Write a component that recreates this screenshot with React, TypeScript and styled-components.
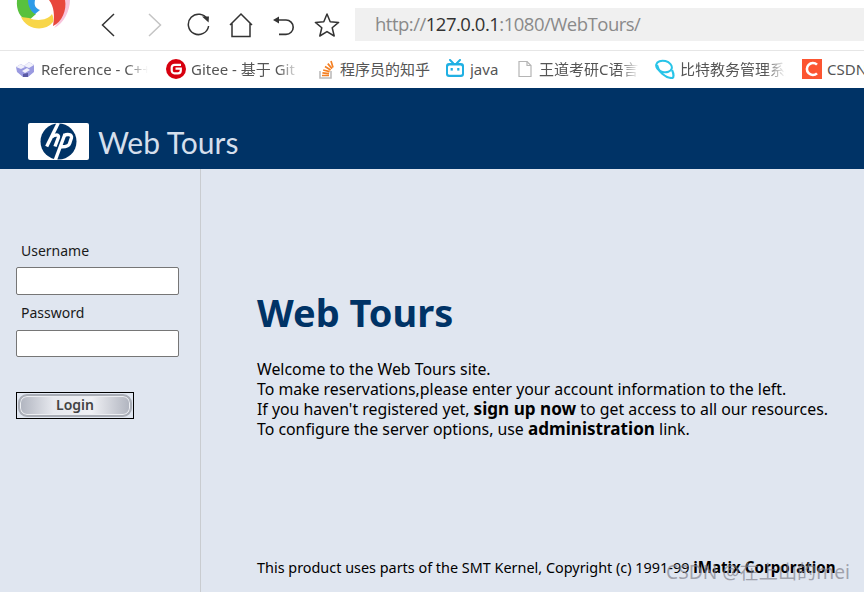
import React from 'react'
import styled, { createGlobalStyle } from 'styled-components'

const GlobalStyle = createGlobalStyle`
  html, body {
    margin: 0;
    padding: 0;
    height: 100%;
    overflow: hidden;
    background: #e0e6f0;
  }
`

const Page = styled.div`
  position: relative;
  width: 864px;
  height: 592px;
  overflow: hidden;
  display: flex;
  flex-direction: column;
  font-family: "Noto Sans", "Noto Sans CJK SC", sans-serif;
`

const Toolbar = styled.div`
  box-sizing: border-box;
  display: flex;
  align-items: flex-start;
  padding-left: 16px;
  background: #fff;
  border-bottom: 1px solid #e6e6e6;
  flex: none;
  height: 51px;
`

const LogoIcon = styled.svg`
  flex: none;
`

const NavIcon = styled.svg<{ $left: number }>`
  margin-left: ${props => props.$left}px;
  margin-top: 12px;
  flex: none;
`

const AddressBar = styled.div`
  margin-left: 15px;
  margin-top: 8px;
  flex: 1;
  height: 33px;
  padding-left: 20px;
  background: #f0f0f0;
  font-family: "Open Sans", sans-serif;
  font-size: 18.5px;
  letter-spacing: -0.5px;
  line-height: 32px;
  color: #8a8a8a;
  white-space: nowrap;
`

const Host = styled.span`
  color: #333;
`

const Bookmarks = styled.div`
  height: 37px;
  box-sizing: border-box;
  padding: 0 0 2px 15px;
  flex: none;
  display: flex;
  align-items: center;
  background: #fff;
  overflow: hidden;
`

const Bookmark = styled.div<{ $gap: number }>`
  display: flex;
  align-items: center;
  gap: 6px;
  flex: none;
  margin-right: ${props => props.$gap}px;
`

const TightIcon = styled.svg`
  margin-right: -1px;
`

const BookmarkText = styled.span<{ $width: number; $fade: boolean }>`
  width: ${props => props.$width}px;
  font-size: 15px;
  line-height: 20px;
  color: #555;
  white-space: nowrap;
  overflow: hidden;
  ${props => props.$fade && `
    -webkit-mask-image: linear-gradient(to right, #000 80%, transparent 100%);
    mask-image: linear-gradient(to right, #000 80%, transparent 100%);
  `}
`

const Header = styled.div`
  height: 81px;
  flex: none;
  box-sizing: border-box;
  padding: 35px 0 0 28px;
  display: flex;
  align-items: flex-start;
  gap: 9px;
  background: #003366;
`

const Brand = styled.span`
  font-family: Lato, sans-serif;
  font-weight: 400;
  font-size: 30px;
  line-height: 38px;
  color: #d5dfec;
`

const Body = styled.div`
  flex: 1;
  display: flex;
  background: #e0e6f0;
`

const Sidebar = styled.div`
  width: 201px;
  flex: none;
  box-sizing: border-box;
  padding: 73px 0 0 16px;
  border-right: 1px solid #c9ccd0;
  display: flex;
  flex-direction: column;
`

const FieldLabel = styled.label`
  margin-left: 5px;
  height: 18px;
  font-size: 14px;
  line-height: 18px;
  color: #1a1a1a;
`

const TextInput = styled.input<{ $top: number; $height: number }>`
  display: block;
  width: 163px;
  height: ${props => props.$height}px;
  box-sizing: border-box;
  margin: ${props => props.$top}px 0 9px;
  padding: 0 4px;
  background: #fff;
  border: 1px solid #767676;
  border-radius: 2px;
`

const LoginOuter = styled.div`
  margin-top: 26px;
  width: 118px;
  height: 27px;
  box-sizing: border-box;
  padding: 1px;
  border: 1px solid #000;
  background: #e0e6f0;
`

const LoginButton = styled.button`
  display: block;
  width: 100%;
  height: 100%;
  padding: 0 0 2px;
  border: 2px solid #a9adb6;
  border-radius: 9px;
  box-shadow: inset 0 0 0 1px #eceef2;
  background: linear-gradient(to right, #b0b4bf 0%, #e6e8ee 30%, #eff0f4 65%, #b0b4bf 100%);
  font-family: "Noto Sans", sans-serif;
  font-size: 14px;
  font-weight: 600;
  line-height: 15px;
  color: #444;
`

const Main = styled.div`
  flex: 1;
  padding: 0 0 0 56px;
  display: flex;
  flex-direction: column;
`

const Title = styled.h1`
  margin: 118px 0 0;
  height: 50px;
  font-size: 38px;
  line-height: 50px;
  font-weight: 700;
  color: #003366;
`

const Welcome = styled.div`
  margin-top: 22px;
  font-size: 15.85px;
  line-height: 20px;
  color: #000;
  white-space: nowrap;
`

const Strong = styled.b<{ $scale: number }>`
  font-size: ${props => props.$scale}em;
  line-height: 1;
`

const Footer = styled.div`
  margin-top: auto;
  padding-bottom: 14px;
  font-size: 14.42px;
  line-height: 20px;
  color: #000;
  white-space: nowrap;
`

const Watermark = styled.div`
  position: absolute;
  right: 14px;
  bottom: 8px;
  font-size: 19.2px;
  line-height: 24px;
  color: rgba(130, 130, 140, 0.7);
  white-space: nowrap;
`

const AppLogo = () => (
  <LogoIcon width="54" height="30" viewBox="0 0 54 30">
    <defs>
      <filter id="soft">
        <feGaussianBlur stdDeviation="0.6" />
      </filter>
    </defs>
    <g filter="url(#soft)">
      <path d="M49 0 H54 C54 10 48 24 38 28 C44 20 50 10 49 0 Z" fill="#f8c4dc" />
      <path d="M33 0 H49 C51 10 46 22 37 26 C39 16 38 6 33 0 Z" fill="#e8473c" />
      <path d="M1 0 C0 10 4 18 12 21 L20 14 C16 11 15 6 15 0 Z" fill="#58c13c" />
      <path d="M12 0 H19 C18 5 19 8 24 10 L19 14 C14 11 12 5 12 0 Z" fill="#2f9be8" />
      <path d="M5 17 C10 29 28 33 37 22 C38 20 37 16 36 14 C31 21 20 21 13 18 Z" fill="#f8d64a" />
    </g>
  </LogoIcon>
)

const HpLogo = () => (
  <svg width="61" height="37" viewBox="0 0 61 37">
    <rect width="61" height="37" rx="2" fill="#fff" />
    <circle cx="30.5" cy="18.5" r="18" fill="#003366" />
    <g fill="none" stroke="#fff" strokeWidth="3.4">
      <path d="M30.3 0 L18.7 23.5" />
      <path d="M24 14 C26 11.5 31.5 11 30.4 14.5 L27 23.5" />
      <path d="M37 11 L27.3 37" />
      <path d="M36 12.5 C39 11 44.5 11 43.4 15 L41.6 20.5 C40.4 24 36.5 24 32.4 23.7" />
    </g>
  </svg>
)

const Bookmarked = [
  {
    width: 107,
    gap: 18,
    fade: true,
    text: 'Reference - C++',
    icon: (
      <svg width="20" height="20" viewBox="0 0 20 20">
        <path d="M1 8 L6 5 L9 7 L14 3 L19 6 L19 13 L13 18 L8 18 L2 13 Z" fill="#9a9ae0" />
        <path d="M1 8 L6 5 L10 8 L6 10 Z M9 7 L14 3 L19 6 L14 9 Z M7 12 L12 9 L15 11 L10 14 Z" fill="#f2f2fb" />
        <path d="M8 18 L13 18 L13 14 L8 15 Z" fill="#5a5aa4" />
      </svg>
    )
  },
  {
    width: 109,
    gap: 18,
    fade: true,
    text: 'Gitee - 基于 Git',
    icon: (
      <TightIcon width="20" height="20" viewBox="0 0 20 20">
        <circle cx="10" cy="10" r="10" fill="#d7000f" />
        <path d="M15 5.8 H8.5 A2.8 2.8 0 0 0 5.7 8.6 V11.5 A2.8 2.8 0 0 0 8.5 14.3 H12 A2.8 2.8 0 0 0 14.8 11.5 V9.7 H9.5" fill="none" stroke="#fff" strokeWidth="2.2" />
      </TightIcon>
    )
  },
  {
    width: 90,
    gap: 15,
    fade: false,
    text: '程序员的知乎',
    icon: (
      <TightIcon width="17" height="20" viewBox="0 0 17 20">
        <path d="M2 12 V19 H13 V12" fill="none" stroke="#bcbbbb" strokeWidth="1.6" />
        <path d="M4 16.5 H11 M4.4 13.8 L11 14.6 M5.2 11 L11.6 12.6 M7 7.6 L12.6 11 M9.8 4.6 L14 9.6 M13 2 L15 8.6" stroke="#f48024" strokeWidth="1.7" />
      </TightIcon>
    )
  },
  {
    width: 29,
    gap: 18,
    fade: false,
    text: 'java',
    icon: (
      <TightIcon width="20" height="20" viewBox="0 0 20 20">
        <path d="M5 1 L8 4 M15 1 L12 4" stroke="#20b0e3" strokeWidth="2" strokeLinecap="round" />
        <rect x="1" y="4" width="18" height="14" rx="3" fill="#20b0e3" />
        <rect x="3" y="6.4" width="14" height="9.4" rx="1.5" fill="#fff" />
        <rect x="5.6" y="9" width="2.2" height="2.6" fill="#20b0e3" />
        <rect x="12.2" y="9" width="2.2" height="2.6" fill="#20b0e3" />
      </TightIcon>
    )
  },
  {
    width: 100,
    gap: 16,
    fade: true,
    text: '王道考研C语言',
    icon: (
      <svg width="16" height="20" viewBox="0 0 16 20">
        <path d="M2 2.5 H10 L14 6.5 V17.5 H2 Z" fill="#fff" stroke="#b5b5b5" strokeWidth="1.2" />
        <path d="M10 2.5 V6.5 H14" fill="none" stroke="#b5b5b5" strokeWidth="1.2" />
      </svg>
    )
  },
  {
    width: 106,
    gap: 16,
    fade: true,
    text: '比特教务管理系统',
    icon: (
      <TightIcon width="20" height="20" viewBox="0 0 20 20">
        <ellipse cx="9" cy="7.5" rx="8" ry="5.6" transform="rotate(15 9 7.5)" fill="none" stroke="#28c4e8" strokeWidth="2" />
        <path d="M2 6 C3 12 10 19 17 19 C19 19 19 15 17 11" fill="none" stroke="#28c4e8" strokeWidth="2.2" />
      </TightIcon>
    )
  },
  {
    width: 60,
    gap: 0,
    fade: false,
    text: 'CSDN',
    icon: (
      <TightIcon width="20" height="20" viewBox="0 0 20 20">
        <rect width="20" height="20" fill="#fc5531" />
        <path d="M15 5.6 A6 6 0 1 0 15 14.4" fill="none" stroke="#fff" strokeWidth="2.6" />
      </TightIcon>
    )
  }
]

const App = () => {
  return (
    <Page>
      <GlobalStyle />
      <Toolbar>
        <AppLogo />
        <NavIcon $left={30} width="16" height="26" viewBox="0 0 16 26">
          <path d="M14 2 L2.5 13 L14 24" fill="none" stroke="#333" strokeWidth="1.5" />
        </NavIcon>
        <NavIcon $left={31} width="16" height="26" viewBox="0 0 16 26">
          <path d="M2 2 L13.5 13 L2 24" fill="none" stroke="#c4c4c4" strokeWidth="1.5" />
        </NavIcon>
        <NavIcon $left={24} width="24" height="26" viewBox="0 0 24 26">
          <path d="M20.5 7.5 A10.2 10.2 0 1 0 21.6 14" fill="none" stroke="#333" strokeWidth="1.5" />
          <path d="M15 4.6 L22 4.6 L21.6 10.5 Z" fill="#333" />
        </NavIcon>
        <NavIcon $left={18} width="24" height="26" viewBox="0 0 24 26">
          <path d="M1 13 L12 2 L23 13 M3 11 V24.5 H21 V11" fill="none" stroke="#333" strokeWidth="1.5" />
        </NavIcon>
        <NavIcon $left={19} width="24" height="26" viewBox="0 0 24 26">
          <path d="M5 8 H14 A7.2 7.2 0 0 1 14 22.4 H7" fill="none" stroke="#333" strokeWidth="1.6" />
          <path d="M7 4.5 V11.5 L1 8 Z" fill="#333" />
        </NavIcon>
        <NavIcon $left={18} width="26" height="26" viewBox="0 0 26 26">
          <path d="M13 2 L16.2 9.8 L24.6 10.4 L18.2 15.8 L20.2 24 L13 19.6 L5.8 24 L7.8 15.8 L1.4 10.4 L9.8 9.8 Z" fill="none" stroke="#333" strokeWidth="1.5" strokeLinejoin="round" />
        </NavIcon>
        <AddressBar>
          http://<Host>127.0.0.1</Host>:1080/WebTours/
        </AddressBar>
      </Toolbar>
      <Bookmarks>
        {Bookmarked.map((b, i) => (
          <Bookmark key={i} $gap={b.gap}>
            {b.icon}
            <BookmarkText $width={b.width} $fade={b.fade}>{b.text}</BookmarkText>
          </Bookmark>
        ))}
      </Bookmarks>
      <Header>
        <HpLogo />
        <Brand>Web Tours</Brand>
      </Header>
      <Body>
        <Sidebar>
          <FieldLabel>Username</FieldLabel>
          <TextInput $top={7} $height={28} type="text" />
          <FieldLabel>Password</FieldLabel>
          <TextInput $top={8} $height={27} type="password" />
          <LoginOuter>
            <LoginButton>Login</LoginButton>
          </LoginOuter>
        </Sidebar>
        <Main>
          <Title>Web Tours</Title>
          <Welcome>
            Welcome to the Web Tours site.<br />
            To make reservations,please enter your account information to the left.<br />
            If you haven't registered yet, <Strong $scale={1.08}>sign up now</Strong> to get access to all our resources.<br />
            To configure the server options, use <Strong $scale={1.08}>administration</Strong> link.
          </Welcome>
          <Footer>
            This product uses parts of the SMT Kernel, Copyright (c) 1991-99 <Strong $scale={1.05}>iMatix Corporation</Strong>
          </Footer>
        </Main>
      </Body>
      <Watermark>CSDN @在上山的mei</Watermark>
    </Page>
  )
}

export default App
